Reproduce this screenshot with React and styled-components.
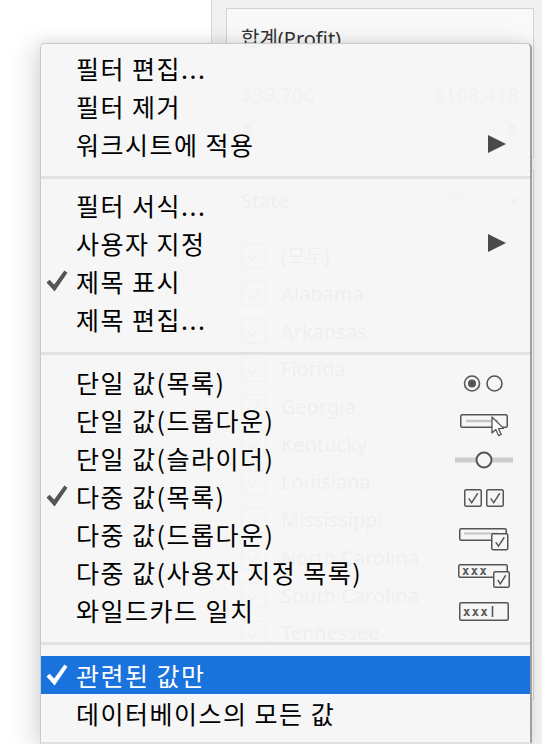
import React from 'react';
import styled, { createGlobalStyle } from 'styled-components';
import { Filter, Search } from 'lucide-react';

const GlobalStyle = createGlobalStyle`
  html, body { margin: 0; padding: 0; background: #fff; }
  body { font-family: "Noto Sans", "Noto Sans CJK KR", sans-serif; }
  * { box-sizing: border-box; }
`;

const ICON = '#555';
const MENU_BG = '#f6f6f6';

const Screen = styled.div`
  position: relative;
  width: 542px;
  height: 744px;
  overflow: hidden;
  display: flex;
  background: #fff;
`;

const Blank = styled.div`
  width: 213px;
  border-right: 1px solid #d9d9d9;
`;

const Pane = styled.div`
  flex: 1;
  background: #f1f1f1;
  padding: 8px 8px 0 14px;
  display: flex;
  flex-direction: column;
  gap: 12px;
`;

const Card = styled.div`
  height: ${p => p.$h}px;
  background: #f9f9f9;
  border: 1px solid #d2d2d2;
  padding: 16px 14px 0 14px;
  color: #333;
  font-family: "Noto Sans", "Noto Sans CJK KR", sans-serif;
`;

const CardTitle = styled.div`
  font-size: 20px;
  line-height: 28px;
  display: flex;
  align-items: center;
  justify-content: space-between;
`;

const Tools = styled.div`
  display: flex;
  align-items: center;
  gap: 12px;
  color: #999;
`;

const Caret = styled.span`
  width: 0;
  height: 0;
  border-left: 6px solid transparent;
  border-right: 6px solid transparent;
  border-top: 7px solid #999;
`;

const Values = styled.div`
  margin-top: 28px;
  display: flex;
  justify-content: space-between;
  font-size: 20px;
  line-height: 28px;
  color: #666;
`;

const Range = styled.div`
  margin-top: 14px;
  height: 12px;
  display: flex;
  align-items: center;
`;

const StateList = styled.div`
  margin-top: 22px;
  display: flex;
  flex-direction: column;
`;

const StateRow = styled.div`
  height: 37.7px;
  display: flex;
  align-items: center;
  gap: 14px;
  font-size: 20px;
`;

const Tick = styled.span`
  width: 26px;
  height: 26px;
  border: 2px solid #9a9a9a;
  border-radius: 2px;
  display: flex;
  align-items: center;
  justify-content: center;
`;

const Menu = styled.div`
  position: absolute;
  left: 40px;
  top: 43px;
  width: 492px;
  height: 701px;
  background: rgba(246, 246, 246, 0.965);
  border: 1px solid #c9c9c9;
  border-right: 2px solid #a0a0a0;
  border-bottom: 2px solid #e0e0e0;
  border-radius: 5px 5px 0 0;
  box-shadow: -8px 2px 24px rgba(0, 0, 0, 0.13), 0 -2px 10px rgba(0, 0, 0, 0.06);
  font-family: "Noto Sans CJK KR", "Noto Sans", sans-serif;
  font-size: 25px;
  letter-spacing: 1.5px;
  color: #000;
`;

const Group = styled.div`
  padding: ${p => p.$pt}px 0 ${p => p.$pb}px;
  & + & { border-top: 3px solid #e2e2e2; }
`;

const Row = styled.div`
  height: 38px;
  display: flex;
  align-items: center;
  background: ${p => (p.$active ? '#1a73dc' : 'transparent')};
  color: ${p => (p.$active ? '#fff' : '#000')};
`;

const CheckCol = styled.div`
  width: 35px;
  padding-left: 5px;
  display: flex;
  align-items: center;
`;

const Label = styled.div`
  flex: 1;
  line-height: 38px;
  white-space: nowrap;
`;

const Trail = styled.div`
  width: 60px;
  margin-right: 16px;
  display: flex;
  align-items: center;
  justify-content: ${p => (p.$end ? 'flex-end' : 'center')};
  padding-right: ${p => (p.$end ? 8 : 0)}px;
`;

const Mark = ({ color }) => (
  <svg width="22" height="22" viewBox="0 0 22 22">
    <path d="M0.5 12.5 L3.6 9.8 L8.2 14.6 L18.4 0.6 L21.5 2.8 L8.6 21.4 Z" fill={color} />
  </svg>
);

const Arrow = () => (
  <svg width="18" height="18" viewBox="0 0 18 18">
    <path d="M0 0 L18 9 L0 18 Z" fill="#4a4a4a" />
  </svg>
);

const Box = ({ x, y, s }) => (
  <g>
    <rect x={x} y={y} width={s} height={s} rx="1.5" fill={MENU_BG} stroke={ICON} strokeWidth="1.5" />
    <path
      d={`M${x + 4} ${y + s * 0.52} L${x + s * 0.42} ${y + s * 0.78} L${x + s - 3.5} ${y + 3.5}`}
      fill="none"
      stroke={ICON}
      strokeWidth="1.4"
    />
  </g>
);

const Ico = ({ children }) => (
  <svg width="60" height="30" viewBox="0 0 60 30" style={{ overflow: 'visible' }}>
    {children}
  </svg>
);

const RadioIcon = () => (
  <Ico>
    <circle cx="18" cy="16.5" r="7.5" fill="none" stroke={ICON} strokeWidth="1.6" />
    <circle cx="18" cy="16.5" r="4" fill={ICON} />
    <circle cx="40.5" cy="16.5" r="7.5" fill="none" stroke={ICON} strokeWidth="1.6" />
  </Ico>
);

const PointerIcon = () => (
  <Ico>
    <rect x="6.75" y="9.75" width="46.5" height="12.5" rx="1.5" fill="none" stroke={ICON} strokeWidth="1.5" />
    <line x1="12" y1="16" x2="44" y2="16" stroke="#c4c4c4" strokeWidth="2.5" />
    <path
      d="M38 12 L38 28 L41.8 24.6 L44.6 30.6 L47.2 29.4 L44.5 23.6 L49.6 23.4 Z"
      fill="#fff"
      stroke={ICON}
      strokeWidth="1.3"
      strokeLinejoin="round"
    />
  </Ico>
);

const SliderIcon = () => (
  <Ico>
    <rect x="1" y="14.5" width="58" height="5" fill="#cdcdcd" />
    <circle cx="30" cy="17" r="7.5" fill={MENU_BG} stroke={ICON} strokeWidth="2" />
  </Ico>
);

const ChecksIcon = () => (
  <Ico>
    <Box x={10.75} y={8.75} s={16.5} />
    <Box x={32.75} y={8.75} s={16.5} />
  </Ico>
);

const DropCheckIcon = () => (
  <Ico>
    <rect x="5.75" y="9.75" width="46.5" height="11.5" rx="1.5" fill="none" stroke={ICON} strokeWidth="1.5" />
    <line x1="10" y1="14.5" x2="44" y2="14.5" stroke="#c4c4c4" strokeWidth="2.2" />
    <Box x={37.75} y={14.75} s={16} />
  </Ico>
);

const ListCheckIcon = () => (
  <Ico>
    <rect x="4.75" y="7.75" width="48.5" height="12.5" rx="1.5" fill="none" stroke={ICON} strokeWidth="1.5" />
    <text x="8" y="18" fontSize="12" fontFamily="DejaVu Sans Mono, monospace" fontWeight="bold" letterSpacing="1.5" fill={ICON}>
      xxx
    </text>
    <Box x={39.75} y={14.75} s={15.5} />
  </Ico>
);

const WildIcon = () => (
  <Ico>
    <rect x="5.75" y="7.75" width="48.5" height="17.5" rx="1.5" fill="none" stroke={ICON} strokeWidth="1.5" />
    <text x="9" y="21" fontSize="12" fontFamily="DejaVu Sans Mono, monospace" fontWeight="bold" letterSpacing="1.5" fill={ICON}>
      xxx
    </text>
    <line x1="38.5" y1="11" x2="38.5" y2="22" stroke={ICON} strokeWidth="1.6" />
  </Ico>
);

const groups = [
  {
    pt: 5, pb: 13,
    items: [
      { label: '필터 편집...' },
      { label: '필터 제거' },
      { label: '워크시트에 적용', sub: true },
    ],
  },
  {
    pt: 7, pb: 14,
    items: [
      { label: '필터 서식...' },
      { label: '사용자 지정', sub: true },
      { label: '제목 표시', checked: true },
      { label: '제목 편집...' },
    ],
  },
  {
    pt: 8, pb: 13,
    items: [
      { label: '단일 값(목록)', icon: RadioIcon },
      { label: '단일 값(드롭다운)', icon: PointerIcon },
      { label: '단일 값(슬라이더)', icon: SliderIcon },
      { label: '다중 값(목록)', checked: true, icon: ChecksIcon },
      { label: '다중 값(드롭다운)', icon: DropCheckIcon },
      { label: '다중 값(사용자 지정 목록)', icon: ListCheckIcon },
      { label: '와일드카드 일치', icon: WildIcon },
    ],
  },
  {
    pt: 11, pb: 0,
    items: [
      { label: '관련된 값만', checked: true, active: true },
      { label: '데이터베이스의 모든 값' },
    ],
  },
];

const states = [
  '(모두)', 'Alabama', 'Arkansas', 'Florida', 'Georgia', 'Kentucky', 'Louisiana',
  'Mississippi', 'North Carolina', 'South Carolina', 'Tennessee', 'Virginia',
];

export default function App() {
  return (
    <>
      <GlobalStyle />
      <Screen>
        <Blank />
        <Pane>
          <Card $h={150}>
            <CardTitle>합계(Profit)</CardTitle>
            <Values>
              <span>$39,706</span>
              <span>$108,418</span>
            </Values>
            <Range>
              <svg width="278" height="12" viewBox="0 0 278 12">
                <rect x="4" y="5" width="270" height="2" fill="#bbb" />
                <path d="M10 0 L4 0 Q0 6 4 12 L10 12 Z" fill="#999" />
                <path d="M268 0 L272 0 Q278 6 272 12 L268 12 Z" fill="#999" />
              </svg>
            </Range>
          </Card>
          <Card $h={530}>
            <CardTitle>
              <span>State</span>
              <Tools>
                <Filter size={18} strokeWidth={1.5} />
                <Search size={18} strokeWidth={1.5} />
                <Caret />
              </Tools>
            </CardTitle>
            <StateList>
              {states.map(s => (
                <StateRow key={s}>
                  <Tick>
                    <svg width="16" height="14" viewBox="0 0 16 14">
                      <path d="M1.5 7.5 L6 12 L14.5 1.5" fill="none" stroke="#777" strokeWidth="1.6" />
                    </svg>
                  </Tick>
                  <span>{s}</span>
                </StateRow>
              ))}
            </StateList>
          </Card>
        </Pane>

        <Menu>
          {groups.map((g, gi) => (
            <Group key={gi} $pt={g.pt} $pb={g.pb}>
              {g.items.map(it => {
                const Icon = it.icon;
                return (
                  <Row key={it.label} $active={it.active}>
                    <CheckCol>{it.checked && <Mark color={it.active ? '#fff' : '#555'} />}</CheckCol>
                    <Label>{it.label}</Label>
                    {it.sub && <Trail $end><Arrow /></Trail>}
                    {Icon && <Trail><Icon /></Trail>}
                  </Row>
                );
              })}
            </Group>
          ))}
        </Menu>
      </Screen>
    </>
  );
}
